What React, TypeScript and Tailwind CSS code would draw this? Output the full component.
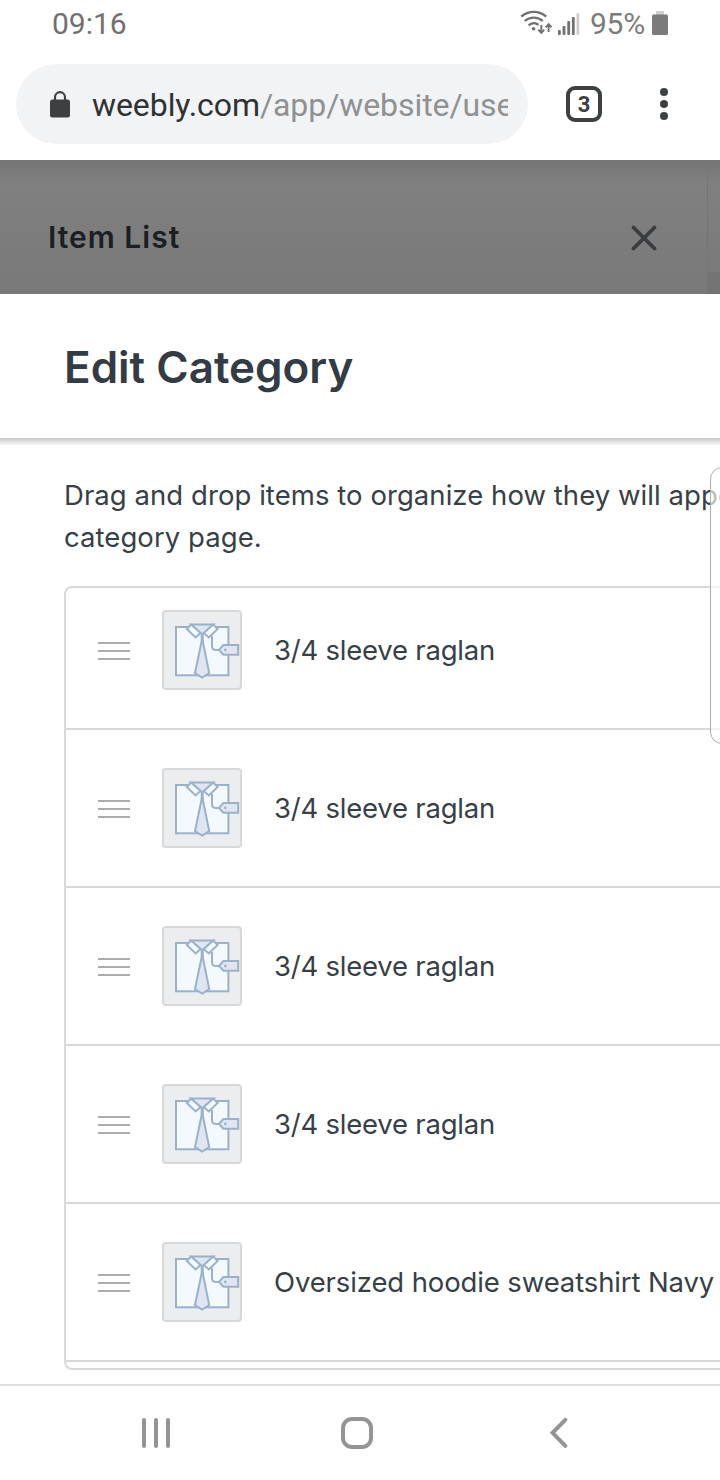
import React from 'react';

const items = [
  { id: 1, name: '3/4 sleeve raglan' },
  { id: 2, name: '3/4 sleeve raglan' },
  { id: 3, name: '3/4 sleeve raglan' },
  { id: 4, name: '3/4 sleeve raglan' },
  { id: 5, name: 'Oversized hoodie sweatshirt Navy' },
];

function WifiIcon() {
  return (
    <svg width="34" height="26" viewBox="0 0 34 26" fill="none" stroke="#707070" strokeWidth="2.3" className="shrink-0">
      <path d="M1.2 6.6C8.5 0.2 19 0.2 26.2 6.6" />
      <path d="M4.8 11C10 6.4 17.6 6.4 22.8 11" />
      <path d="M8.6 15.4C11.7 12.6 15.8 12.6 18.6 14.8" />
      <circle cx="13.6" cy="18.8" r="1.7" fill="#707070" stroke="none" />
      <path d="M21.3 15V22.6M18.3 19.6L21.3 22.8L24.3 19.6" strokeWidth="1.9" />
      <path d="M28.6 22V14.4M25.6 17.4L28.6 14.2L31.6 17.4" strokeWidth="1.9" />
    </svg>
  );
}

function SignalIcon() {
  return (
    <svg width="22" height="22" viewBox="0 0 22 22" fill="#707070" className="shrink-0">
      <rect x="0" y="17" width="2.8" height="5" rx="1" />
      <rect x="4.6" y="13" width="2.8" height="9" rx="1" />
      <rect x="9.3" y="8" width="2.8" height="14" rx="1" />
      <rect x="13.9" y="4" width="2.8" height="18" rx="1" />
      <rect x="18.5" y="0" width="2.8" height="22" rx="1" fill="#cfcfcf" />
    </svg>
  );
}

function ShirtIcon() {
  return (
    <svg width="76" height="76" viewBox="0 0 76 76" fill="none" stroke="#9bb1c9" strokeWidth="2" className="shrink-0">
      <rect x="12" y="15" width="52.4" height="48.3" fill="#f4f9fd" />
      <path d="M27 12.6H49.3L38.2 22.5Z" fill="#dfe6f1" />
      <path d="M27 12.6L22.8 17L31.6 25.4L36.6 21Z" fill="#f4f9fd" />
      <path d="M49.3 12.6L53.6 17L44.8 25.4L39.8 21Z" fill="#f4f9fd" />
      <path d="M38.2 21V29" strokeWidth="3" />
      <path d="M38.2 26.5L31 61L38.2 65.5L45.2 61Z" fill="#dfe6f1" />
      <path d="M48 24V34Q48 37.9 51.6 37.9H55" />
      <path d="M54.9 37.9L59.4 33.1H74.2V42.7H59.4Z" fill="#dfe6f1" />
      <circle cx="61.3" cy="37.9" r="1.3" fill="#9bb1c9" stroke="none" />
    </svg>
  );
}

function DragHandle() {
  return (
    <div className="mt-0.5 flex w-8 shrink-0 flex-col gap-1.5">
      <div className="h-0.5 bg-[#adadad]" />
      <div className="h-0.5 bg-[#adadad]" />
      <div className="h-0.5 bg-[#adadad]" />
    </div>
  );
}

export default function App() {
  return (
    <div className="relative flex h-[1480px] w-[720px] flex-col overflow-hidden bg-white font-['Inter',sans-serif] text-[#373f47]">
      {/* Status bar */}
      <div className="flex h-12 shrink-0 items-center pb-0.5 pl-[52px] pr-[52px] font-['Roboto',sans-serif] text-[30px] text-[#707070]">
        <span>09:16</span>
        <div className="ml-auto flex items-center">
          <WifiIcon />
          <div className="ml-1 mr-2.5 mt-0.5"><SignalIcon /></div>
          <span className="mr-[7px] tracking-[-0.2px] text-[#7b7b7b]">95%</span>
          <svg width="16" height="24" viewBox="0 0 16 24" fill="#7b7b7b">
            <rect x="4" y="0" width="8" height="4" fill="#cfcfcf" />
            <rect x="0" y="3.5" width="16" height="20.5" rx="1.5" />
          </svg>
        </div>
      </div>

      {/* Browser toolbar */}
      <div className="flex h-28 shrink-0 items-center pl-4 font-['Roboto',sans-serif]">
        <div className="flex h-20 w-[512px] items-center rounded-full bg-[#f1f3f5] pl-[34px] pr-5">
          <svg width="20" height="27" viewBox="0 0 20 27" className="shrink-0">
            <path d="M5 10V6.2a5 5 0 0 1 10 0V10" fill="none" stroke="#3c4043" strokeWidth="2.2" />
            <rect x="0" y="8.5" width="20" height="18" rx="2.5" fill="#3c4043" />
          </svg>
          <div className="ml-[18px] mt-0.5 flex-1 overflow-hidden whitespace-nowrap pl-[4px] text-[32px] tracking-[-0.08px] text-[#8f9193]">
            <span className="text-[#2f3133]">weebly.com</span>/app/website/use
          </div>
        </div>
        <div className="ml-[38px] flex size-9 items-center justify-center rounded-[9px] border-4 border-[#3c4043] text-[22px] font-bold text-[#3c4043]">
          3
        </div>
        <div className="ml-[58px] flex flex-col gap-1">
          <div className="size-2 rounded-full bg-[#3c4043]" />
          <div className="size-2 rounded-full bg-[#3c4043]" />
          <div className="size-2 rounded-full bg-[#3c4043]" />
        </div>
      </div>

      {/* Dimmed page behind the modal */}
      <div className="flex h-[134px] shrink-0 bg-gradient-to-b from-[#747474] via-[#808080] via-15% to-[#797979]">
        <div className="flex w-[708px] items-center justify-between border-r border-[#757575] pl-12 pr-[50px] pt-[22px]">
          <span className="-mt-0.5 text-[30px] font-semibold tracking-[1px] text-[#1b1f24]">Item List</span>
          <svg width="26" height="26" viewBox="0 0 26 26" stroke="#3a3d40" strokeWidth="3.8" strokeLinecap="round">
            <path d="M2.5 2.5L23.5 23.5M23.5 2.5L2.5 23.5" />
          </svg>
        </div>
        <div className="flex flex-1 flex-col justify-end">
          <div className="h-[22px] bg-[#737373]" />
        </div>
      </div>

      {/* Modal header */}
      <div className="flex h-36 shrink-0 items-center bg-white pl-16 pt-0.5">
        <h1 className="whitespace-nowrap text-[44px] font-semibold text-[#333b44]">Edit Category</h1>
      </div>
      <div className="h-2 shrink-0 bg-gradient-to-b from-[#c6c6c6] to-white" />

      {/* Modal body */}
      <div className="h-[938px] shrink-0 overflow-hidden pl-16 pt-7">
        <p className="whitespace-nowrap text-[27.5px] leading-[42px] tracking-[0.06px]">
          Drag and drop items to organize how they will appear
          <br />
          category page.
        </p>
        <div className="mt-7 w-[700px] rounded-lg border-2 border-[#d8d9da] pb-1.5">
          {items.map((item, i) => (
            <div
              key={item.id}
              className={`flex items-center border-b-2 border-[#d8d9da] pb-[38px] pl-8 ${i === 0 ? 'pt-[22px]' : 'pt-[38px]'}`}
            >
              <DragHandle />
              <div className="ml-8 size-20 shrink-0 rounded-[4px] border-2 border-[#d6d8da] bg-[#ebedef]">
                <ShirtIcon />
              </div>
              <span className={`ml-8 mt-0.5 whitespace-nowrap text-[27.5px] ${i === 4 ? 'tracking-[-0.12px]' : 'tracking-[-0.22px]'}`}>
                {item.name}
              </span>
            </div>
          ))}
        </div>
      </div>

      {/* System navigation */}
      <div className="flex h-24 shrink-0 items-center border-t-2 border-[#dedede] pl-[142px]">
        <div className="flex gap-2">
          <div className="h-[30px] w-1 rounded-full bg-[#949494]" />
          <div className="h-[30px] w-1 rounded-full bg-[#949494]" />
          <div className="h-[30px] w-1 rounded-full bg-[#949494]" />
        </div>
        <div className="ml-[171px] size-8 rounded-[11px] border-4 border-[#949494]" />
        <svg width="18" height="32" viewBox="0 0 18 32" fill="none" stroke="#949494" strokeWidth="4" strokeLinecap="round" className="ml-[177px]">
          <path d="M15.3 2.8L2.6 15.8L15.3 28.8" />
        </svg>
      </div>

      {/* Edge panel handle */}
      <div className="absolute left-[710px] top-[467px] z-20 h-[277px] w-10 rounded-[12px] border border-[#adadad] bg-white/65" />
    </div>
  );
}
